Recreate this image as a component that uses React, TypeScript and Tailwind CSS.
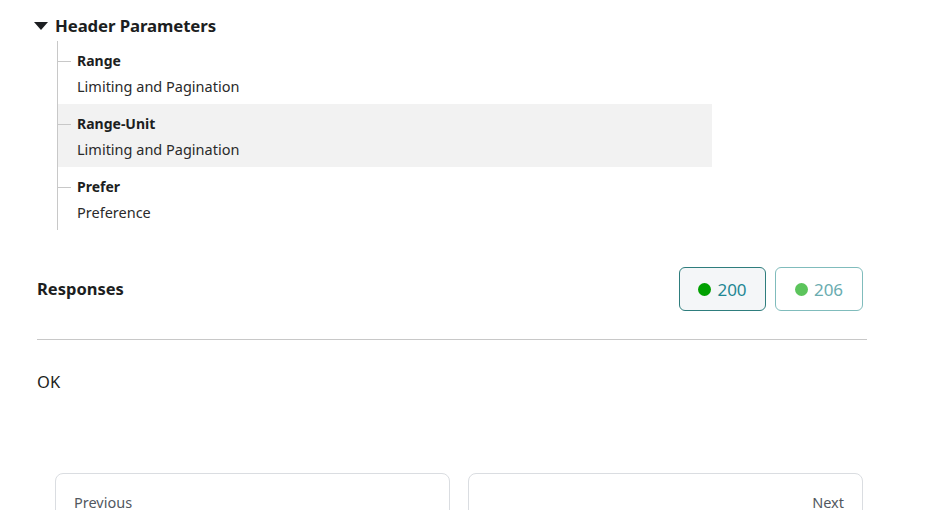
import React from "react";

const params = [
  { name: "Range", desc: "Limiting and Pagination", active: false },
  { name: "Range-Unit", desc: "Limiting and Pagination", active: true },
  { name: "Prefer", desc: "Preference", active: false },
];

export default function App() {
  return (
    <div
      className="w-[937px] h-[510px] overflow-hidden bg-white text-[#1c1e21]"
      style={{ fontFamily: '"Noto Sans", "Open Sans", sans-serif' }}
    >
      {/* Header parameters */}
      <div className="pl-[34px] pt-[14px]">
        <div className="flex items-center h-[24px]">
          <svg width="14" height="8" viewBox="0 0 14 8" className="mr-[7px]">
            <polygon points="0,0 14,0 7,8" fill="#1c1e21" />
          </svg>
          <span className="text-[16.8px] font-bold leading-none tracking-[-0.1px]">Header Parameters</span>
        </div>
        <div className="ml-[23px] mt-[3px] w-[655px] border-l border-[#c8c8c8]">
          {params.map((p) => (
            <div
              key={p.name}
              className={`relative h-[63px] pl-[19px] pt-[9px] ${p.active ? "bg-[#f2f2f2]" : ""}`}
            >
              <span className="absolute left-0 top-[20px] w-[13px] border-t border-[#c8c8c8]" />
              <div className="text-[14px] font-bold leading-[22px]">{p.name}</div>
              <div className="text-[14.5px] leading-[22px] mt-[3px] text-[#2a2a2a]">{p.desc}</div>
            </div>
          ))}
        </div>
      </div>

      {/* Responses */}
      <div className="ml-[37px] w-[830px] mt-[37px]">
        <div className="flex items-center justify-between pr-[4px]">
          <span className="text-[16.5px] font-bold">Responses</span>
          <div className="flex gap-[9px]">
            <button className="flex items-center justify-center gap-[6px] w-[87px] h-[44px] rounded-[6px] border border-[#2e7d7d] bg-[#f4f6f8]">
              <span className="w-[13px] h-[13px] rounded-full bg-[#00a000]" />
              <span className="text-[17px] text-[#1f8794] leading-none">200</span>
            </button>
            <button className="flex items-center justify-center gap-[6px] w-[88px] h-[44px] rounded-[6px] border border-[#80bcbc] bg-white">
              <span className="w-[13px] h-[13px] rounded-full bg-[#5cc45c]" />
              <span className="text-[17px] text-[#6aacb0] leading-none">206</span>
            </button>
          </div>
        </div>
        <div className="mt-[28px] border-t border-[#c8c8c8]" />
        <div className="mt-[30px] text-[16.5px] text-[#1c1e21]">OK</div>
      </div>

      {/* Pagination */}
      <div className="ml-[55px] w-[808px] mt-[78px] grid grid-cols-2 gap-[18px]">
        <div className="h-[60px] rounded-[8px] border border-[#dadde1] px-[18px] pt-[16px]">
          <span className="text-[14.5px] text-[#525860]">Previous</span>
        </div>
        <div className="h-[60px] rounded-[8px] border border-[#dadde1] px-[18px] pt-[16px] text-right">
          <span className="text-[14.5px] text-[#525860]">Next</span>
        </div>
      </div>
    </div>
  );
}
